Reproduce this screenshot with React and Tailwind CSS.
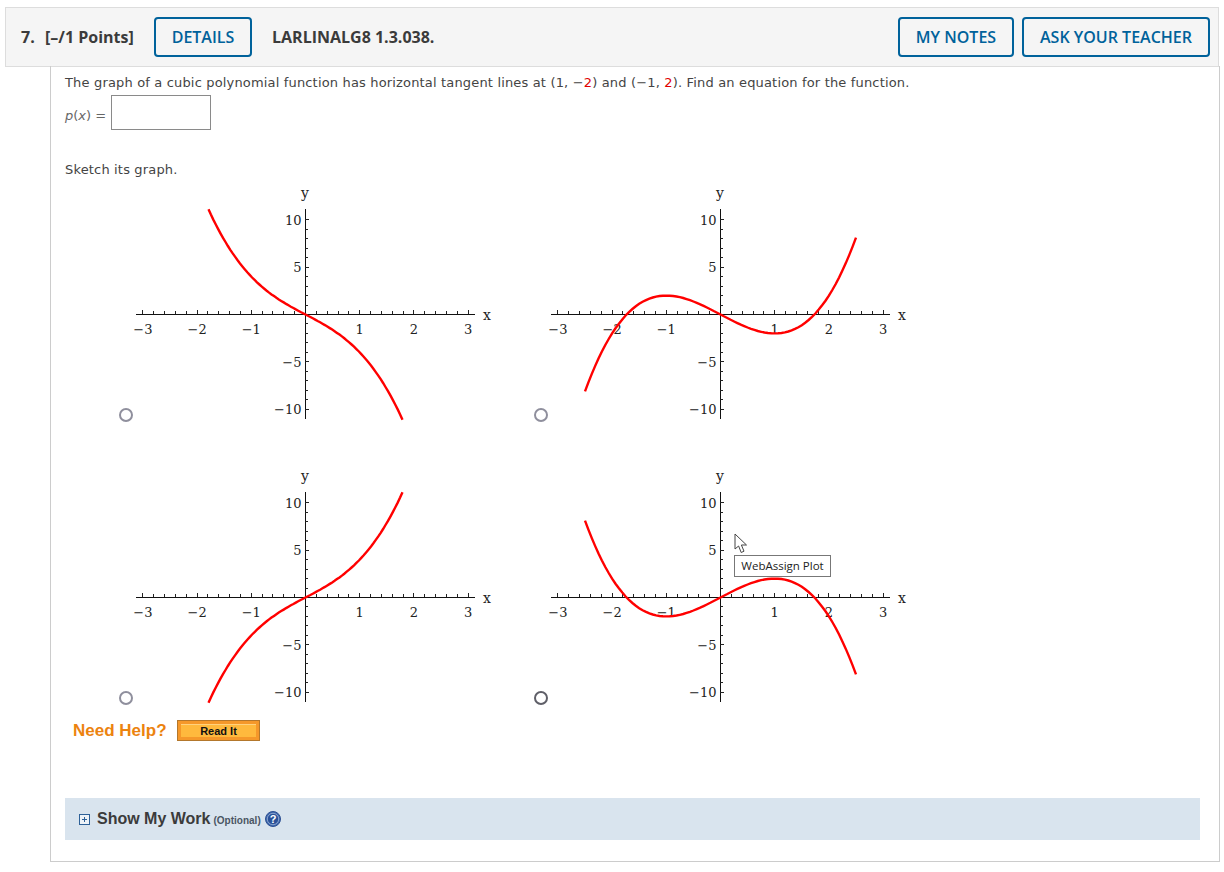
const curve = (fn, from, to) => {
  const pts = [];
  for (let i = 0; i <= 80; i++) {
    const x = from + ((to - from) * i) / 80;
    pts.push(`${(172.5 + x * 54.2).toFixed(1)},${(131.5 - fn(x) * 9.47).toFixed(1)}`);
  }
  return pts.join(" ");
};

const plots = [
  { fn: (x) => -x * x * x - 3 * x, from: -1.79, to: 1.79 },
  { fn: (x) => x * x * x - 3 * x, from: -2.5, to: 2.5 },
  { fn: (x) => x * x * x + 3 * x, from: -1.79, to: 1.79 },
  { fn: (x) => -x * x * x + 3 * x, from: -2.5, to: 2.5 },
];

const xTicks = Array.from({ length: 31 }, (_, i) => i - 15).filter((n) => n !== 0);
const yTicks = Array.from({ length: 21 }, (_, i) => i - 10).filter((n) => n !== 0);

const Plot = ({ fn, from, to }) => (
  <svg width="370" height="245" className="block shrink-0" style={{ fontFamily: '"DejaVu Serif", serif' }}>
    <line x1="3" y1="131.5" x2="342" y2="131.5" stroke="#111" />
    <line x1="172.5" y1="26" x2="172.5" y2="236" stroke="#111" />
    {xTicks.map((n) => {
      const x = Math.round(172 + n * 10.84) + 0.5;
      return <line key={n} x1={x} x2={x} y1="131" y2={n % 5 === 0 ? 127 : 128} stroke="#222" />;
    })}
    {yTicks.map((n) => {
      const y = Math.round(131 - n * 9.47) + 0.5;
      return <line key={n} x1="172" x2={n % 5 === 0 ? 176 : 175} y1={y} y2={y} stroke="#222" />;
    })}
    {[-3, -2, -1, 1, 2, 3].map((n) => (
      <text key={n} x={172.5 + n * 54.2} y="151" fontSize="13" fill="#222" textAnchor="middle">
        {n < 0 ? `\u2212${-n}` : n}
      </text>
    ))}
    {[10, 5, -5, -10].map((n) => (
      <text key={n} x="168.5" y={136.5 - n * 9.47} fontSize="13" fill="#222" textAnchor="end">
        {n < 0 ? `\u2212${-n}` : n}
      </text>
    ))}
    <text x="172" y="15" fontSize="14" fill="#222" textAnchor="middle">y</text>
    <text x="354" y="137" fontSize="14" fill="#222" textAnchor="middle">x</text>
    <polyline points={curve(fn, from, to)} fill="none" stroke="#f00" strokeWidth="2.4" />
  </svg>
);

const Option = ({ plot, hover }) => (
  <div className="flex items-end h-[245px] pl-[3px]">
    <span
      className={`w-[14px] h-[14px] mb-[6px] rounded-full border-2 bg-white shrink-0 ${
        hover ? "border-[#5f5f68]" : "border-[#8f8f9d]"
      }`}
    />
    <Plot {...plot} />
  </div>
);

const OutlineButton = ({ children, className }) => (
  <button
    type="button"
    className={`h-[40px] rounded-[4px] border-2 border-[#00629b] text-[#00629b] font-semibold text-[16px] ${className}`}
  >
    {children}
  </button>
);

export default function App() {
  return (
    <div
      className="w-[1224px] h-[872px] bg-white overflow-hidden pt-[7px] pl-[5px] text-[#444444]"
      style={{ fontFamily: '"DejaVu Sans", sans-serif' }}
    >
      <header
        className="w-[1214px] h-[60px] bg-[#f5f5f5] border border-[#dddddd] flex items-center pl-[15px] pr-[8px] font-bold text-[16px] text-[#3b3b3b]"
        style={{ fontFamily: '"Open Sans", sans-serif' }}
      >
        <span className="w-[24px]">7.</span>
        <span className="w-[109px]">[–/1 Points]</span>
        <OutlineButton className="w-[98px]">DETAILS</OutlineButton>
        <span className="ml-[20px]">LARLINALG8 1.3.038.</span>
        <div className="ml-auto flex gap-[8px]">
          <OutlineButton className="w-[116px]">MY NOTES</OutlineButton>
          <OutlineButton className="w-[188px]">ASK YOUR TEACHER</OutlineButton>
        </div>
      </header>

      <main className="ml-[45px] w-[1170px] h-[796px] -mt-px border-l border-r border-b border-[#cccccc] pl-[14px] pt-[9px]">
        <p className="text-[13px] tracking-[0.165px] leading-[16px] h-[16px] whitespace-nowrap">
          The graph of a cubic polynomial function has horizontal tangent lines at (1, −<span className="text-[#e00000]">2</span>) and (−1, <span className="text-[#e00000]">2</span>). Find an equation for the function.
        </p>
        <div className="flex items-center h-[35px] mt-[4px] text-[13px] text-[#666666]">
          <span className="w-[46px] mt-[7px] whitespace-nowrap">
            <i>p</i>(<i>x</i>) =
          </span>
          <input type="text" className="w-[100px] h-[35px] border border-[#8a8a8a] bg-white outline-none" />
        </div>
        <p className="text-[13px] tracking-[0.165px] leading-[16px] mt-[32px]">Sketch its graph.</p>

        <div className="grid grid-cols-[415px_415px] gap-y-[38px] ml-[51px] mt-[5px] relative">
          {plots.map((plot, i) => (
            <Option key={i} plot={plot} hover={i === 3} />
          ))}
          <svg width="15" height="21" viewBox="0 0 15 21" className="absolute left-[618px] top-[350px]">
            <path d="M1 1 L1 16 L4.6 13 L7.2 19.5 L10 18.2 L7.4 12 L12.5 12 Z" fill="white" stroke="#444" strokeWidth="1" />
          </svg>
          <div
            className="absolute left-[618px] top-[372px] w-[97px] h-[22px] border border-[#777777] bg-white text-[11.5px] leading-[20px] text-center text-[#222]"
            style={{ fontFamily: '"Open Sans", sans-serif' }}
          >
            WebAssign Plot
          </div>
        </div>

        <div className="flex items-center h-[22px] ml-[8px] mt-[8px]" style={{ fontFamily: '"Liberation Sans", sans-serif' }}>
          <span className="w-[104px] text-[17px] mt-[1px] font-bold text-[#ec830f]">Need Help?</span>
          <button
            type="button"
            className="w-[83px] h-[21px] border border-[#b3772c] bg-[#f5982a] p-[3px] flex"
          >
            <span className="flex-1 h-[13px] bg-[#ffb93d] border-t border-[#ffd27e] text-[11px] font-bold leading-[13px] text-[#111]">
              Read It
            </span>
          </button>
        </div>

        <div
          className="mt-[57px] w-[1135px] h-[42px] bg-[#d9e4ee] flex items-center pl-[14px]"
          style={{ fontFamily: '"Liberation Sans", sans-serif' }}
        >
          <span className="w-[11px] h-[11px] border border-[#2e6198] flex items-center justify-center bg-[#eef3f8]">
            <svg width="5" height="5" viewBox="0 0 5 5">
              <path d="M0 2.5H5M2.5 0V5" stroke="#2e6198" strokeWidth="1" />
            </svg>
          </span>
          <span className="ml-[7px] -mt-[1px] text-[16px] font-bold text-[#3b3b3b]">Show My Work</span>
          <span className="ml-[3px] mt-[3px] text-[10px] font-bold text-[#4a5563]">(Optional)</span>
          <svg width="16" height="16" viewBox="0 0 16 16" className="ml-[4px]">
            <circle cx="8" cy="8" r="7.5" fill="#3f68ad" stroke="#2c4f92" />
            <circle cx="8" cy="8" r="5.7" fill="#2a5198" stroke="#9db4d8" strokeWidth="0.8" />
            <text x="8" y="12" fontSize="11" fontWeight="700" fill="white" textAnchor="middle">?</text>
          </svg>
        </div>
      </main>
    </div>
  );
}
